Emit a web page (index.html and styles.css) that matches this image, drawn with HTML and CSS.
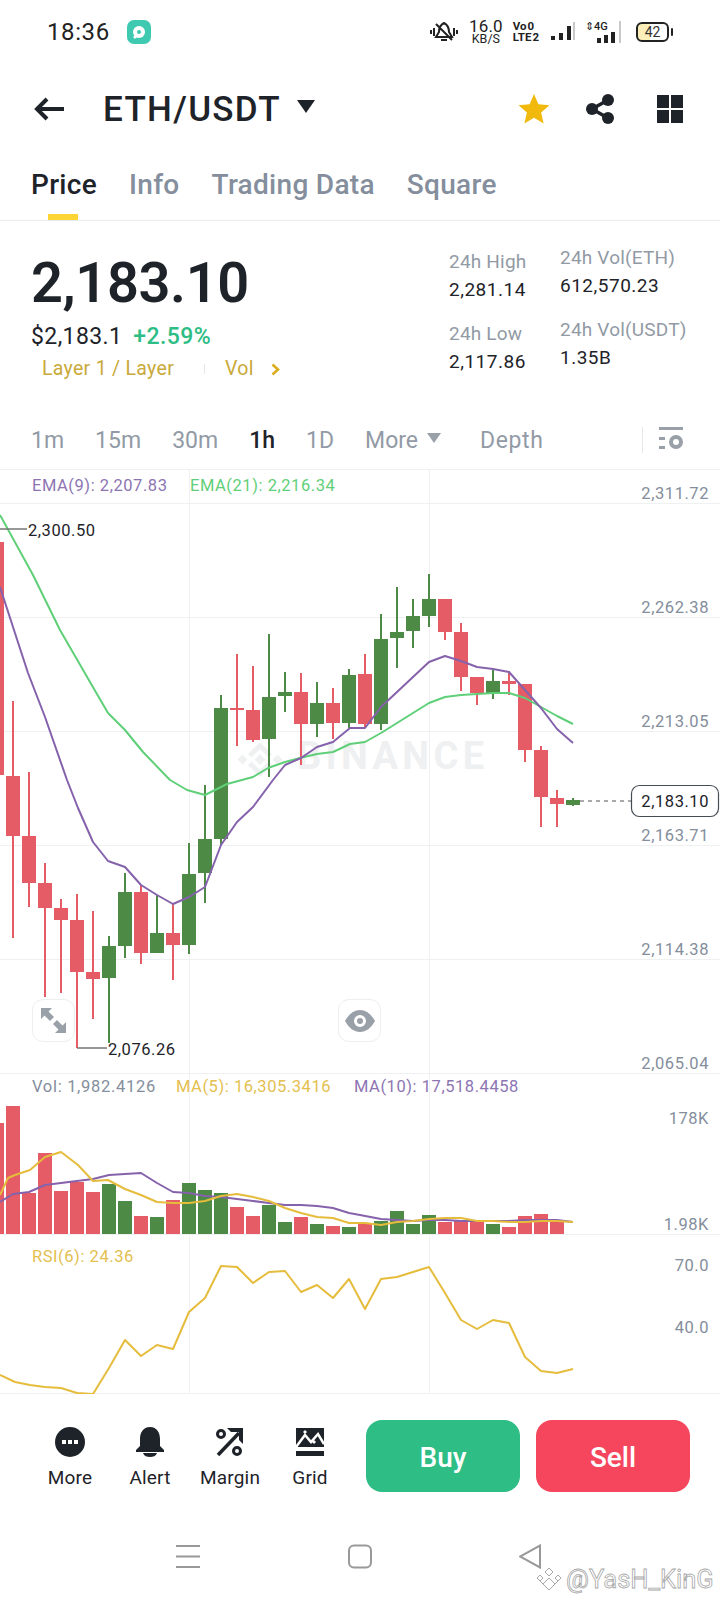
FILE: index.html
```html
<!DOCTYPE html>
<html lang="en">
<head>
<meta charset="utf-8">
<title>ETH/USDT</title>
<link rel="stylesheet" href="styles.css">
</head>
<body>
<div class="app">
  <div class="status">
    <div class="status-left">
      <span class="clock">18:36</span>
      <span class="app-badge"><svg width="24" height="24" viewBox="0 0 24 24"><circle cx="12" cy="12" r="6" class="fill-white"/><circle cx="12" cy="12" r="2" class="fill-teal"/><circle cx="8" cy="17" r="1.6" class="fill-white"/></svg></span>
    </div>
    <div class="status-right">
      <svg class="st-bell" width="30" height="24" viewBox="0 0 30 24"><path class="st-line" d="M15 3C11 5 10 9 10 12L7 17H23L20 12C20 9 19 5 15 3ZM12 20H18M7 4L23 20M2 10V14M5 8V16M25 8V16M28 10V14"/></svg>
      <span class="speed"><b>16.0</b><i>KB/S</i></span>
      <span class="volte"><b>Vo<u>0</u></b><b>LTE<u>2</u></b></span>
      <svg width="26" height="24" viewBox="0 0 26 24"><path class="st-bar" d="M2 16H6V20H2ZM10 13H14V20H10ZM18 6H22V20H18Z"/><path class="st-sep" d="M25 2V20"/></svg>
      <span class="net"><span class="net-tag">⇕4G</span><svg width="18" height="11" viewBox="0 0 18 11"><path class="st-bar" d="M0 6H4V11H0ZM7 3H11V11H7ZM14 0H18V11H14Z"/></svg></span>
      <span class="battery"><span class="battery-body">42</span><span class="battery-tip"></span></span>
    </div>
  </div>

  <header class="head">
    <svg class="back" width="32" height="24" viewBox="0 0 32 24"><path class="back-line" d="M30 12H4M13 2L3 12L13 22"/></svg>
    <h1 class="pair">ETH/USDT</h1>
    <svg class="caret" width="20" height="14" viewBox="0 0 20 14"><path class="fill-ink" d="M1 1H19L10 14Z"/></svg>
    <div class="head-actions">
      <svg width="32" height="30" viewBox="0 0 32 30"><path class="fill-gold" d="M16 0L20.4 10.2L31.5 11.2L23.1 18.6L25.6 29.5L16 23.8L6.4 29.5L8.9 18.6L.5 11.2L11.6 10.2Z"/></svg>
      <svg class="act-share" width="30" height="30" viewBox="0 0 30 30"><path class="share-line" d="M23 6L7 15L23 24"/><circle class="fill-ink" cx="23" cy="6" r="6"/><circle class="fill-ink" cx="7" cy="15" r="6"/><circle class="fill-ink" cx="23" cy="24" r="6"/></svg>
      <svg width="26" height="28" viewBox="0 0 26 28"><path class="fill-ink" d="M0 0H12V13H0ZM14 0H26V13H14ZM0 15H12V28H0ZM14 15H26V28H14Z"/></svg>
    </div>
  </header>

  <nav class="tabs">
    <a class="tab tab-active">Price</a>
    <a class="tab">Info</a>
    <a class="tab">Trading Data</a>
    <a class="tab">Square</a>
  </nav>

  <section class="stats">
    <div class="stats-main">
      <div class="last-price">2,183.10</div>
      <div class="sub"><span>$2,183.1</span><span class="up">+2.59%</span></div>
      <div class="tags"><span class="tag-a">Layer 1 / Layer</span><span class="tag-sep"></span><span>Vol</span><svg width="9" height="13" viewBox="0 0 9 13"><path class="chev" d="M1.500 1.500L7 6.500L1.500 11.500"/></svg></div>
    </div>
    <div class="stat-col stat-col-a">
      <div class="stat-label">24h High</div><div class="stat-value">2,281.14</div>
      <div class="stat-label stat-next">24h Low</div><div class="stat-value">2,117.86</div>
    </div>
    <div class="stat-col stat-col-b">
      <div class="stat-label">24h Vol(ETH)</div><div class="stat-value">612,570.23</div>
      <div class="stat-label stat-next">24h Vol(USDT)</div><div class="stat-value">1.35B</div>
    </div>
  </section>

  <div class="frames">
    <span>1m</span><span>15m</span><span>30m</span><span class="frame-active">1h</span><span>1D</span>
    <span class="frame-more">More<svg width="14" height="10" viewBox="0 0 14 10"><path class="fill-grey" d="M0 0H14L7 10Z"/></svg></span>
    <span class="frame-depth">Depth</span>
    <span class="frame-tool"><svg width="25" height="25" viewBox="0 0 25 25"><path class="fill-grey" d="M0 0H24V3H0ZM0 10H6V13H0ZM0 19H6V22H0Z"/><circle class="tool-ring" cx="17" cy="15" r="5"/></svg></span>
  </div>

  <div class="chart-wrap">
    <svg class="chart" width="720" height="925" viewBox="0 469 720 925">
      <path class="grid" d="M0 469.500H720M0 503.500H720M0 617.500H720M0 731.500H720M0 845.500H720M0 959.500H720M0 1073.500H720M0 1234.500H720M0 1393.500H720M189.500 469V1393M429.500 469V1393"/>
      <g class="mark">
        <path class="mark-logo" d="M260 742L272 754L268.500 757.500L260 749L251.500 757.500L248 754ZM260 777L272 765L268.500 761.500L260 770L251.500 761.500L248 765ZM260 754L265.500 759.500L260 765L254.500 759.500ZM242.500 754.500L247.500 759.500L242.500 764.500L237.500 759.500ZM277.500 754.500L282.500 759.500L277.500 764.500L272.500 759.500Z"/>
        <text class="mark-text" x="297" y="769" textLength="187">BINANCE</text>
      </g>
      <path class="wick red" d="M-3 529V775M13 701V938M29 772V907M45 863V997M61 899V993M77 894V1048M93 911V1019M141 885V964M173 903V980M237 654V746M253 666V742M301 673V765M333 688V739M365 654V727M445 599V640M461 623V691M477 677V705M509 671V695M525 684V762M541 746V827M557 790V827"/>
      <path class="wick green" d="M109 936V1043M125 873V958M157 895V953M189 843V954M205 785V903M221 695V845M269 634V777M285 672V712M317 682V737M349 669V728M381 614V730M397 587V668M413 599V648M429 574V627M493 670V699M573 798V806"/>
      <path class="body red" d="M-3 542V775M13 776V836M29 836V883M45 883V908M61 908V920M77 920V972M93 972V979M141 892V953M173 933V945M237 708V710M253 710V740M301 692V724M333 703V723M365 674V724M445 599V632M461 632V677M477 677V693M509 681V684M525 684V750M541 750V797M557 798V804"/>
      <path class="body green" d="M109 946V978M125 892V946M157 933V953M189 874V945M205 839V873M221 708V839M269 697V739M285 692V696M317 703V724M349 675V723M381 639V724M397 632V638M413 616V631M429 599V616M493 681V693M573 800V805"/>
      <polyline class="line l-green" points="0,515 33,575 60,630 90,682 108,713 125,730 143,752 170,780 187,790 205,795 227,784 253,777 268,768 285,762 300,758 317,754 333,752 350,744 365,742 381,733 429,703 445,697 461,695 493,693 509,693 525,698 541,707 557,716 573,724"/>
      <polyline class="line l-purple" points="0,587 13,627 28,673 45,717 67,780 78,808 93,842 108,861 125,867 141,885 157,895 173,904 189,897 205,887 221,845 237,822 253,807 273,780 285,765 301,758 317,747 333,742 350,728 365,728 381,707 429,662 445,656 461,661 477,667 493,669 509,672 525,690 541,708 557,729 573,743"/>
      <path class="dash" d="M580 801H631"/>
      <path class="tick" d="M0 529H27M77 1048H107"/>
      <rect class="tag-box" x="631.500" y="785.500" width="87" height="31" rx="8"/>
      <text class="t-axis t-ink" x="709" y="807" text-anchor="end">2,183.10</text>
      <text class="t-axis t-ink" x="28" y="536">2,300.50</text>
      <text class="t-axis t-ink" x="108" y="1055">2,076.26</text>
      <text class="t-axis t-purple" x="32" y="491">EMA(9): 2,207.83</text>
      <text class="t-axis t-green" x="190" y="491">EMA(21): 2,216.34</text>
      <g class="t-axis t-grey">
        <text x="709" y="499" text-anchor="end">2,311.72</text>
        <text x="709" y="613" text-anchor="end">2,262.38</text>
        <text x="709" y="727" text-anchor="end">2,213.05</text>
        <text x="709" y="841" text-anchor="end">2,163.71</text>
        <text x="709" y="955" text-anchor="end">2,114.38</text>
        <text x="709" y="1069" text-anchor="end">2,065.04</text>
        <text x="709" y="1124" text-anchor="end">178K</text>
        <text x="709" y="1230" text-anchor="end">1.98K</text>
        <text x="709" y="1271" text-anchor="end">70.0</text>
        <text x="709" y="1333" text-anchor="end">40.0</text>
        <text class="t-vol" x="32" y="1092">Vol: 1,982.4126</text>
      </g>
      <text class="t-axis t-yellow" x="176" y="1092">MA(5): 16,305.3416</text>
      <text class="t-axis t-purple" x="354" y="1092">MA(10): 17,518.4458</text>
      <text class="t-axis t-yellow" x="32" y="1262">RSI(6): 24.36</text>
      <path class="bar red" d="M-3 1123V1234M13 1106V1234M29 1193V1234M45 1153V1234M61 1191V1234M77 1182V1234M93 1192V1234M141 1216V1234M173 1200V1234M237 1207V1234M253 1216V1234M301 1217V1234M333 1226V1234M365 1224V1234M445 1222V1234M461 1220V1234M477 1222V1234M509 1227V1234M525 1216V1234M541 1214V1234M557 1222V1234"/>
      <path class="bar green" d="M109 1184V1234M125 1201V1234M157 1217V1234M189 1183V1234M205 1190V1234M221 1193V1234M269 1205V1234M285 1222V1234M317 1224V1234M349 1227V1234M381 1221V1234M397 1211V1234M413 1224V1234M429 1215V1234M493 1224V1234"/>
      <polyline class="line l-purple" points="0,1202 13,1194 29,1192 45,1185 61,1183 77,1181 93,1179 109,1175 125,1174 141,1173 157,1183 173,1192 189,1193 205,1196 221,1197 237,1199 253,1201 269,1203 285,1205 301,1205 317,1206 333,1208 349,1213 360,1215 381,1219 397,1220 413,1221 429,1220 445,1220 461,1221 477,1221 493,1221 509,1221 525,1220 541,1220 557,1220 573,1222"/>
      <polyline class="line l-yellow" points="0,1195 8,1178 15,1175 30,1170 45,1157 61,1152 78,1165 93,1181 108,1180 125,1189 141,1195 157,1202 173,1203 189,1203 205,1201 221,1196 237,1194 253,1197 269,1201 285,1208 301,1213 317,1217 333,1218 349,1223 365,1223 381,1225 397,1222 413,1221 429,1219 445,1218 461,1218 477,1221 493,1221 509,1222 525,1222 541,1221 557,1221 573,1222"/>
      <polyline class="line l-yellow" points="0,1375 15,1382 30,1385 45,1387 61,1388 77,1393 93,1394 109,1368 125,1340 141,1356 157,1345 173,1349 189,1312 205,1298 221,1266 237,1267 253,1283 269,1272 285,1271 301,1292 317,1285 333,1298 349,1279 365,1309 381,1279 397,1277 413,1272 429,1267 445,1293 461,1320 477,1329 493,1320 509,1323 525,1357 541,1371 557,1373 573,1369"/>
    </svg>
    <button class="float-btn float-expand"><svg width="26" height="26" viewBox="0 0 26 26"><path class="fill-grey" d="M0 0H11L7.500 3.500L13 9L9 13L3.500 7.500L0 11ZM25 25H14L17.500 21.500L12 16L16 12L21.500 17.500L25 14Z"/></svg></button>
    <button class="float-btn float-eye"><svg width="30" height="22" viewBox="0 0 30 22"><path class="fill-grey" fill-rule="evenodd" d="M0 11C4 4 9 0 15 0S26 4 30 11C26 18 21 22 15 22S4 18 0 11ZM15 5A6 6 0 1 0 15 17A6 6 0 1 0 15 5ZM15 8A3 3 0 1 1 15 14A3 3 0 1 1 15 8Z"/></svg></button>
  </div>

  <footer class="actions">
    <a class="action"><svg width="30" height="30" viewBox="0 0 30 30"><circle class="fill-ink" cx="15" cy="15" r="15"/><path class="fill-white" d="M7 13H11V17H7ZM13 13H17V17H13ZM19 13H23V17H19Z"/></svg><span>More</span></a>
    <a class="action"><svg width="30" height="30" viewBox="0 0 30 30"><path class="fill-ink" d="M15 0C8 0 5 6 5 12V19L1 23V25H29V23L25 19V12C25 6 22 0 15 0ZM8 26H22C21 29 18 30 15 30S9 29 8 26Z"/></svg><span>Alert</span></a>
    <a class="action"><svg width="30" height="30" viewBox="0 0 30 30"><circle class="ring" cx="6" cy="7" r="3.500"/><circle class="ring" cx="22" cy="24" r="3.500"/><path class="pct-line" d="M3 28L24 6"/><path class="fill-ink" d="M12 1H28V17L24 13V5H16Z"/></svg><span>Margin</span></a>
    <a class="action"><svg width="30" height="30" viewBox="0 0 30 30"><path class="fill-ink" d="M1 1H29V20H1ZM1 24H29V29H1Z"/><path class="zig" d="M1 20L10 8L16 15L23 7L29 17"/><path class="fill-white" d="M10 3L12 5L10 7L8 5ZM19 13L21 15L19 17L17 15Z"/></svg><span>Grid</span></a>
    <a class="trade trade-buy">Buy</a>
    <a class="trade trade-sell">Sell</a>
  </footer>

  <div class="sysnav">
    <svg width="26" height="25" viewBox="0 0 26 25"><path class="nav-line" d="M1 2H25M1 12.500H25M1 23H25"/></svg>
    <svg width="26" height="25" viewBox="0 0 26 25"><rect class="nav-line" x="2" y="1.500" width="22" height="22" rx="5"/></svg>
    <svg width="26" height="25" viewBox="0 0 26 25"><path class="nav-line" d="M21 1.500V23.500L1 12.500Z"/></svg>
  </div>

  <div class="watermark">
    <svg width="28" height="24" viewBox="0 0 28 24"><path class="wm-logo" d="M14 1L18 5L14 9L10 5ZM5 8L8 11L5 14L2 11ZM23 8L26 11L23 14L20 11ZM14 23L5 14L8 17L14 11L20 17L23 14Z"/></svg>
    <span>@YasH_KinG</span>
  </div>
</div>
</body>
</html>
```
FILE: styles.css
```css
* { box-sizing: border-box; }
html, body { margin: 0; padding: 0; background: #fff; }
body { font-family: Roboto, "Liberation Sans", sans-serif; color: #1e2329; }
.app { position: relative; width: 720px; height: 1600px; overflow: hidden; display: flex; flex-direction: column; background: #fff; }

.fill-white { fill: #fff; }
.fill-teal { fill: #3fc9b0; }
.fill-ink { fill: #1e2329; }
.fill-gold { fill: #f0b90b; }
.fill-grey { fill: #9aa0a8; }

/* status bar */
.status { height: 64px; display: flex; align-items: center; justify-content: space-between; padding: 0 47px 0 47px; }
.status-left { display: flex; align-items: center; gap: 17px; }
.clock { font-size: 24px; letter-spacing: .6px; color: #222; }
.app-badge { width: 24px; height: 24px; border-radius: 7px; background: #3fc9b0; display: block; }
.app-badge svg { display: block; }
.status-right { display: flex; align-items: center; gap: 10px; }
.st-line { fill: none; stroke: #222; stroke-width: 2; }
.st-bar { fill: #222; }
.st-sep { stroke: #c9c9c9; stroke-width: 2; fill: none; }
.speed { display: flex; flex-direction: column; align-items: center; color: #222; line-height: 1; }
.speed b { font-weight: 400; font-size: 17px; line-height: 13px; letter-spacing: .2px; }
.speed i { font-style: normal; font-size: 12.500px; line-height: 12px; }
.volte { display: flex; flex-direction: column; font-size: 11.500px; line-height: 11px; color: #222; }
.volte b { font-weight: 700; }
.volte u { text-decoration: none; margin-left: 1px; }
.net { display: flex; flex-direction: column; align-items: flex-end; width: 36px; height: 22px; padding-right: 4px; border-right: 2px solid #c9c9c9; }
.net-tag { font-size: 11px; line-height: 11px; font-weight: 500; color: #222; align-self: flex-start; white-space: nowrap; }
.net svg { display: block; }
.battery { display: flex; align-items: center; gap: 2px; margin-left: 5px; }
.battery-body { width: 33px; height: 20px; border: 2px solid #222; border-radius: 6px; font-size: 14px; line-height: 16px; text-align: center; background: linear-gradient(90deg, #fbeeb8 42%, #fff 42%); color: #333; }
.battery-tip { width: 2px; height: 8px; background: #222; border-radius: 1px; }

/* header */
.head { height: 90px; display: flex; align-items: center; padding: 0 37px 0 34px; }
.back-line { fill: none; stroke: #1e2329; stroke-width: 4; }
.pair { margin: 0 0 0 37px; font-size: 35px; font-weight: 500; letter-spacing: 1.3px; color: #1e2329; }
.caret { margin: -6px 0 0 15px; }
.head-actions { margin-left: auto; display: flex; align-items: center; }
.head-actions svg { display: block; }
.act-share { margin: 0 42px 0 35px; }
.share-line { fill: none; stroke: #1e2329; stroke-width: 3.500; }

/* tabs */
.tabs { height: 67px; display: flex; gap: 32px; padding: 0 0 0 31px; border-bottom: 1px solid #eaecef; }
.tab { position: relative; font-size: 28px; font-weight: 500; line-height: 62px; letter-spacing: .3px; color: #848e9c; }
.tab-active { color: #1e2329; }
.tab-active::after { content: ""; position: absolute; left: 17px; bottom: 0; width: 30px; height: 6px; background: #fcd535; }

/* stats */
.stats { height: 199px; display: flex; padding-left: 31px; }
.stats-main { width: 418px; padding-top: 30px; }
.last-price { font-size: 56px; line-height: 64px; font-weight: 600; letter-spacing: -.4px; color: #1e2329; }
.sub { display: flex; gap: 11px; font-size: 23px; line-height: 30px; letter-spacing: .4px; margin-top: 7px; }
.up { color: #2ebd85; font-weight: 500; }
.tags { display: flex; align-items: center; font-size: 19.500px; line-height: 26px; letter-spacing: .3px; color: #c9a93a; padding-left: 11px; margin-top: 4px; }
.tag-sep { width: 1px; height: 10px; background: #e6e6e6; margin: 0 20px 0 30px; }
.tags svg { margin-left: 17px; }
.chev { fill: none; stroke: #d9ad1e; stroke-width: 2.600; }
.stat-col { font-size: 19px; line-height: 28px; letter-spacing: .2px; }
.stat-col-a { width: 111px; padding-top: 27px; }
.stat-col-b { padding-top: 23px; }
.stat-label { color: #929aa5; }
.stat-value { color: #1e2329; letter-spacing: .5px; }
.stat-next { margin-top: 16px; }

/* timeframes */
.frames { height: 49px; display: flex; align-items: center; gap: 31px; padding: 0 0 9px 31px; font-size: 23px; color: #929aa5; }
.frame-active { color: #1e2329; font-weight: 500; }
.frame-more { display: flex; align-items: center; gap: 9px; }
.frame-more svg { margin-top: -5px; }
.frame-depth { margin-left: 8px; letter-spacing: .6px; }
.frame-tool { margin-left: auto; margin-right: 36px; border-left: 1px solid #e6e8ea; padding-left: 16px; height: 26px; }
.tool-ring { fill: #fff; stroke: #9aa0a8; stroke-width: 4; }

/* chart */
.chart-wrap { position: relative; height: 925px; }
.chart { display: block; }
.grid { stroke: #eef0f2; stroke-width: 1; fill: none; }
.mark-logo { fill: #eff0f1; }
.mark-text { font-size: 38px; font-weight: 700; fill: #eff0f1; }
.wick { stroke-width: 2; fill: none; }
.body, .bar { stroke-width: 14; fill: none; }
.wick.red, .body.red, .bar.red { stroke: #e65c66; }
.wick.green, .body.green, .bar.green { stroke: #4c8a45; }
.line { fill: none; stroke-width: 2; stroke-linejoin: round; }
.l-green { stroke: #5fcf78; }
.l-purple { stroke: #8562ab; }
.l-yellow { stroke: #e5bc3c; }
.dash { stroke: #555; stroke-width: 1; stroke-dasharray: 4 4; fill: none; }
.tick { stroke: #777; stroke-width: 1.500; fill: none; }
.tag-box { fill: #fff; stroke: #474d57; stroke-width: 1.200; }
.t-axis { font-size: 16.500px; letter-spacing: .55px; }
.t-vol { letter-spacing: .7px; }
.t-ink { fill: #1e2329; }
.t-grey { fill: #848e9c; }
.t-purple { fill: #8d75b3; }
.t-green { fill: #5fcf78; }
.t-yellow { fill: #e3c04f; }
.float-btn { position: absolute; top: 530px; width: 43px; height: 43px; padding: 0; border: 1.500px solid #eceef0; border-radius: 11px; background: #fff; display: flex; align-items: center; justify-content: center; }
.float-expand { left: 32px; }
.float-eye { left: 338px; }

/* bottom actions */
.actions { height: 136px; display: flex; align-items: flex-start; padding: 26px 0 0 30px; }
.action { width: 80px; display: flex; flex-direction: column; align-items: center; padding-top: 7px; font-size: 19px; line-height: 26px; letter-spacing: .2px; color: #1e2329; }
.action svg { display: block; margin-bottom: 8px; }
.ring { fill: none; stroke: #1e2329; stroke-width: 3; }
.pct-line { stroke: #1e2329; stroke-width: 3.500; fill: none; }
.zig { fill: none; stroke: #fff; stroke-width: 2.500; }
.trade { width: 154px; height: 72px; padding-top: 3px; border-radius: 16px; display: flex; align-items: center; justify-content: center; font-size: 28px; font-weight: 500; color: #fff; }
.trade-buy { margin-left: 16px; background: #2ebd85; }
.trade-sell { margin-left: 16px; background: #f6465d; }

/* system nav */
.sysnav { display: flex; padding: 14px 0 0 175px; gap: 146px; }
.sysnav svg { display: block; }
.nav-line { fill: none; stroke: #999; stroke-width: 2; }

.watermark { position: absolute; left: 535px; top: 1566px; display: flex; align-items: center; gap: 3px; font-size: 25.500px; line-height: 26px; color: transparent; -webkit-text-stroke: .8px #a8a8a8; }
.wm-logo { fill: #fff; stroke: #a8a8a8; stroke-width: 1; }
```
